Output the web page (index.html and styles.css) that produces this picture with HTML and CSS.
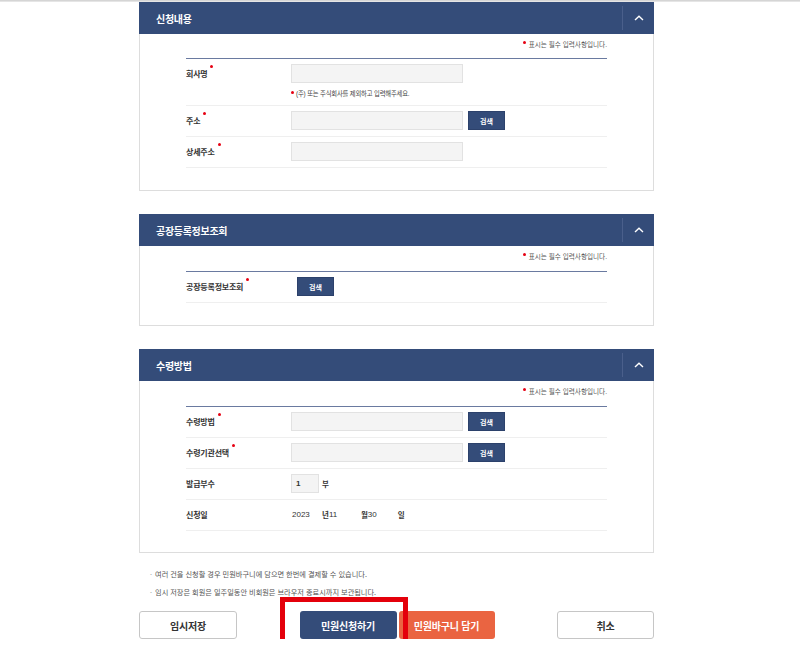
FILE: index.html
```html
<!DOCTYPE html>
<html lang="ko">
<head>
<meta charset="utf-8">
<title>민원신청</title>
<link rel="stylesheet" href="styles.css">
</head>
<body>
<div class="topbar"></div>
<main class="wrap">
  <section class="panel">
    <div class="panel-head">
      <h2>신청내용</h2>
      <button class="toggle" type="button"><svg width="10" height="6" viewBox="0 0 10 6"><polyline points="1,5 5,1.2 9,5" fill="none" stroke="#fff" stroke-width="1.4"/></svg></button>
    </div>
    <div class="panel-body">
      <p class="req-note"><span class="dot"></span>표시는 필수 입력사항입니다.</p>
      <div class="form">
        <div class="row">
          <div class="label"><span>회사명</span><i class="dot"></i></div>
          <div class="field">
            <span class="input"></span>
            <p class="help"><span class="dot"></span>(주) 또는 주식회사를 제외하고 입력해주세요.</p>
          </div>
        </div>
        <div class="row">
          <div class="label"><span>주소</span><i class="dot"></i></div>
          <div class="field inline"><span class="input"></span><button class="search" type="button">검색</button></div>
        </div>
        <div class="row">
          <div class="label"><span>상세주소</span><i class="dot"></i></div>
          <div class="field inline"><span class="input"></span></div>
        </div>
      </div>
    </div>
  </section>

  <section class="panel">
    <div class="panel-head">
      <h2>공장등록정보조회</h2>
      <button class="toggle" type="button"><svg width="10" height="6" viewBox="0 0 10 6"><polyline points="1,5 5,1.2 9,5" fill="none" stroke="#fff" stroke-width="1.4"/></svg></button>
    </div>
    <div class="panel-body">
      <p class="req-note"><span class="dot"></span>표시는 필수 입력사항입니다.</p>
      <div class="form">
        <div class="row">
          <div class="label wide"><span>공장등록정보조회</span><i class="dot"></i></div>
          <div class="field inline"><button class="search first" type="button">검색</button></div>
        </div>
      </div>
    </div>
  </section>

  <section class="panel">
    <div class="panel-head">
      <h2>수령방법</h2>
      <button class="toggle" type="button"><svg width="10" height="6" viewBox="0 0 10 6"><polyline points="1,5 5,1.2 9,5" fill="none" stroke="#fff" stroke-width="1.4"/></svg></button>
    </div>
    <div class="panel-body">
      <p class="req-note"><span class="dot"></span>표시는 필수 입력사항입니다.</p>
      <div class="form">
        <div class="row">
          <div class="label"><span>수령방법</span><i class="dot"></i></div>
          <div class="field inline"><span class="input"></span><button class="search" type="button">검색</button></div>
        </div>
        <div class="row">
          <div class="label"><span>수령기관선택</span><i class="dot"></i></div>
          <div class="field inline"><span class="input"></span><button class="search" type="button">검색</button></div>
        </div>
        <div class="row">
          <div class="label"><span>발급부수</span></div>
          <div class="field inline"><span class="qty">1</span><span class="unit">부</span></div>
        </div>
        <div class="row">
          <div class="label"><span>신청일</span></div>
          <div class="field inline date">
            <span class="num y">2023</span><span class="unit">년</span>
            <span class="num m">11</span><span class="unit">월</span>
            <span class="num d">30</span><span class="unit">일</span>
          </div>
        </div>
      </div>
    </div>
  </section>

  <ul class="notes">
    <li>여러 건을 신청할 경우 민원바구니에 담으면 한번에 결제할 수 있습니다.</li>
    <li>임시 저장은 회원은 일주일동안 비회원은 브라우저 종료시까지 보관됩니다.</li>
  </ul>

  <div class="actions">
    <button class="btn btn-line" type="button">임시저장</button>
    <div class="center">
      <button class="btn btn-primary" type="button">민원신청하기</button>
      <button class="btn btn-orange" type="button">민원바구니 담기</button>
      <span class="highlight"></span>
    </div>
    <button class="btn btn-line cancel" type="button">취소</button>
  </div>
</main>
</body>
</html>
```
FILE: styles.css
```css
html {
  overflow: hidden;
}
body {
  margin: 0;
  padding: 0;
  background: #fff;
  font-family: "Liberation Sans", "Noto Sans CJK KR", sans-serif;
  color: #333;
}
.topbar {
  height: 2px;
  background: linear-gradient(#cdcdcd, #ededed);
}
.wrap {
  width: 515px;
  margin-left: 139px;
}
.panel + .panel {
  margin-top: 23px;
}
.panel-head {
  height: 32px;
  background: #344c79;
  display: flex;
  align-items: center;
}
.panel-head h2 {
  flex: 1;
  margin: 0;
  padding-left: 17px;
  font-family: "Noto Sans CJK KR", sans-serif;
  font-size: 10px;
  font-weight: 700;
  letter-spacing: -0.3px;
  color: #fff;
}
.toggle {
  width: 32px;
  height: 24px;
  padding: 0;
  border: 0;
  border-left: 1px solid #4a5f8b;
  background: transparent;
  display: flex;
  align-items: center;
  justify-content: center;
}
.panel-body {
  border: 1px solid #dddddd;
  border-top: 0;
  padding: 6px 46px 22px 46px;
}
.panel:last-of-type .panel-body {
  padding-bottom: 21px;
}
.dot {
  display: inline-block;
  width: 3px;
  height: 3px;
  border-radius: 50%;
  background: #e60012;
}
.req-note {
  height: 10px;
  margin: 0 0 8px;
  text-align: right;
  font-size: 6.6px;
  line-height: 10px;
  color: #555;
}
.panel + .panel .req-note {
  margin-bottom: 9px;
}
.req-note .dot {
  margin-right: 3px;
  vertical-align: 3px;
}
.form {
  border-top: 1px solid #6a7aa0;
}
.row {
  display: flex;
  padding: 5px 0 6px;
  border-bottom: 1px solid #efefef;
}
.label {
  width: 105px;
  flex: none;
  display: flex;
  align-items: flex-start;
  font-family: "Noto Sans CJK KR", sans-serif;
  font-size: 8px;
  font-weight: 700;
  letter-spacing: -0.2px;
  color: #333;
}
.label.wide {
  width: 111px;
}
.label span {
  line-height: 19px;
}
.label .dot {
  margin: 1px 0 0 3px;
}
.field.inline {
  display: flex;
  align-items: center;
  height: 19px;
}
.input {
  display: block;
  width: 172px;
  height: 19px;
  box-sizing: border-box;
  background: #f4f4f4;
  border: 1px solid #e2e2e2;
}
.help {
  height: 11px;
  margin: 5px 0 0;
  font-size: 6.3px;
  line-height: 11px;
  letter-spacing: -0.15px;
  color: #444;
}
.help .dot {
  margin-right: 2px;
  vertical-align: 2px;
}
.search {
  width: 37px;
  height: 19px;
  margin-left: 5px;
  padding: 0;
  box-sizing: border-box;
  background: #344c79;
  border: 1px solid #2c416b;
  color: #fff;
  font-family: "Noto Sans CJK KR", sans-serif;
  font-size: 7px;
  font-weight: 700;
}
.search.first {
  margin-left: 0;
}
.qty {
  width: 28px;
  height: 19px;
  box-sizing: border-box;
  background: #f4f4f4;
  border: 1px solid #e2e2e2;
  padding-left: 4px;
  font-size: 8px;
  font-weight: 700;
  line-height: 17px;
  color: #333;
}
.unit {
  font-family: "Noto Sans CJK KR", sans-serif;
  font-size: 7.5px;
  font-weight: 700;
  color: #333;
}
.qty + .unit {
  margin-left: 3px;
}
.date .num {
  font-size: 8px;
  color: #333;
}
.date .y { width: 30px; padding-left: 1px; }
.date .m { width: 32px; }
.date .d { width: 30px; }
.notes {
  list-style: none;
  margin: 12px 0 10px;
  padding: 0 0 0 11px;
  font-family: "Noto Sans CJK KR", sans-serif;
  font-size: 7.2px;
  line-height: 18px;
  color: #555;
}
.notes li {
  height: 18px;
}
.notes li::before {
  content: "·";
  color: #999;
  margin-right: 3px;
}
.actions {
  height: 28px;
  display: flex;
  justify-content: space-between;
  align-items: center;
}
.center {
  position: relative;
  display: flex;
  gap: 2px;
}
.btn {
  height: 28px;
  padding: 0;
  box-sizing: border-box;
  border-radius: 3px;
  font-family: "Noto Sans CJK KR", sans-serif;
  font-size: 10px;
  font-weight: 700;
  letter-spacing: -0.2px;
}
.btn-line {
  width: 98px;
  background: #fff;
  border: 1px solid #c6c6c6;
  color: #333;
}
.btn-line.cancel {
  width: 97px;
}
.btn-primary {
  width: 97px;
  border: 0;
  background: #344c79;
  color: #fff;
}
.btn-orange {
  width: 96px;
  border: 0;
  background: #ea6441;
  color: #fff;
}
.highlight {
  position: absolute;
  left: -20px;
  top: -14px;
  width: 128px;
  height: 49px;
  box-sizing: border-box;
  border: 5px solid #e4000b;
  pointer-events: none;
}
```
